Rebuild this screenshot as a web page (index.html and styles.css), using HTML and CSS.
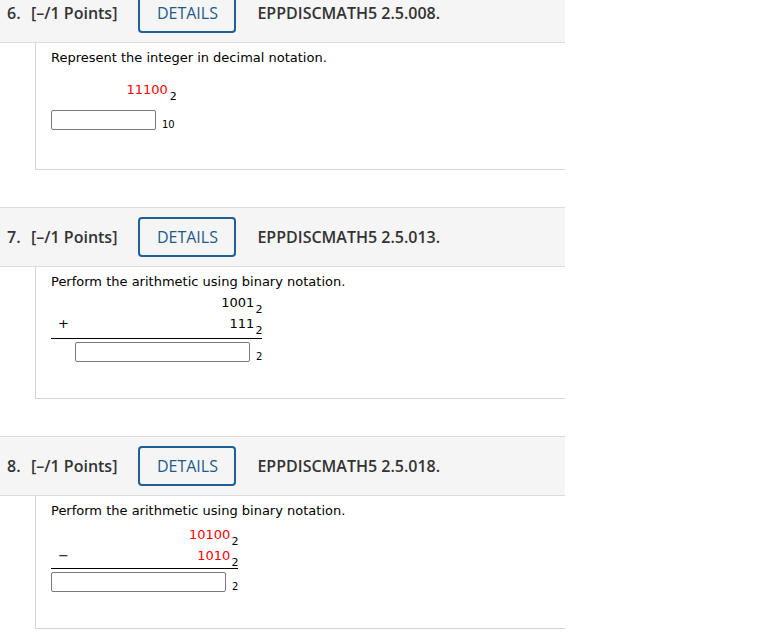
FILE: index.html
```html
<!DOCTYPE html>
<html lang="en">
<head>
  <meta charset="UTF-8">
  <meta name="viewport" content="width=device-width, initial-scale=1.0">
  <title>Assignment</title>
  <link rel="stylesheet" href="styles.css">
</head>
<body>
  <div class="page">
    <div class="question">
      <div class="q-head">
        <span class="q-num">6.</span>
        <span class="q-points">[–/1 Points]</span>
        <button class="details" type="button">DETAILS</button>
        <span class="q-code">EPPDISCMATH5 2.5.008.</span>
      </div>
      <div class="q-body">
        <p class="prompt">Represent the integer in decimal notation.</p>
        <div class="convert">
          <div class="num"><span class="red">11100</span><sub>2</sub></div>
          <div class="answer"><input type="text" class="box box-sm"><span class="base">10</span></div>
        </div>
      </div>
    </div>

    <div class="question">
      <div class="q-head">
        <span class="q-num">7.</span>
        <span class="q-points">[–/1 Points]</span>
        <button class="details" type="button">DETAILS</button>
        <span class="q-code">EPPDISCMATH5 2.5.013.</span>
      </div>
      <div class="q-body">
        <p class="prompt">Perform the arithmetic using binary notation.</p>
        <div class="arith arith-add">
          <span class="op"></span>
          <span class="num">1001<sub>2</sub></span>
          <span class="op rule">+</span>
          <span class="num rule">111<sub>2</sub></span>
          <div class="answer col-num"><input type="text" class="box"><span class="base">2</span></div>
        </div>
      </div>
    </div>

    <div class="question">
      <div class="q-head">
        <span class="q-num">8.</span>
        <span class="q-points">[–/1 Points]</span>
        <button class="details" type="button">DETAILS</button>
        <span class="q-code">EPPDISCMATH5 2.5.018.</span>
      </div>
      <div class="q-body">
        <p class="prompt">Perform the arithmetic using binary notation.</p>
        <div class="arith arith-sub">
          <span class="op"></span>
          <span class="num"><span class="red">10100</span><sub>2</sub></span>
          <span class="op rule">&minus;</span>
          <span class="num rule"><span class="red">1010</span><sub>2</sub></span>
          <div class="answer col-all"><input type="text" class="box"><span class="base">2</span></div>
        </div>
      </div>
    </div>
  </div>
</body>
</html>
```

FILE: styles.css
```css
body {
  margin: 0;
  font-family: "DejaVu Sans", Verdana, sans-serif;
  font-size: 13px;
  color: #000;
  background-color: #fff;
}
.page {
  width: 565px;
  margin-top: -17px;
}
.question {
  margin-bottom: 37px;
}
.q-head {
  display: flex;
  align-items: center;
  height: 58px;
  padding-left: 7px;
  background-color: #f5f5f5;
  border-top: 1px solid #dcdcdc;
  border-bottom: 1px solid #dcdcdc;
  font-family: "Open Sans", "Noto Sans", sans-serif;
  font-size: 16px;
  font-weight: 600;
  color: #333;
}
.q-num {
  width: 24px;
}
.q-points {
  margin-right: 21px;
}
.details {
  width: 98px;
  height: 40px;
  margin-right: 21px;
  padding: 0;
  background: transparent;
  border: 2px solid #1c6094;
  border-radius: 4px;
  font-family: "Open Sans", "Noto Sans", sans-serif;
  font-size: 16px;
  font-weight: 400;
  color: #1f5a88;
  cursor: pointer;
}
.q-body {
  margin-left: 35px;
  padding: 7px 15px 36px;
  border-left: 1px solid #d4d4d4;
  border-bottom: 1px solid #d4d4d4;
}
.prompt {
  margin: 0;
  line-height: 16px;
}
.red {
  color: #ff0000;
}
.num {
  line-height: 21px;
  text-align: right;
}
.num sub {
  margin-left: 1px;
  font-size: 11px;
  line-height: 0;
  vertical-align: -6px;
}
.convert {
  display: inline-flex;
  flex-direction: column;
  align-items: flex-end;
  margin: 13px 0 3px;
}
.convert .num {
  margin-right: -2px;
}
.convert .num sub {
  margin-left: 2px;
}
.convert .answer {
  margin-top: 10px;
}
.answer {
  display: flex;
  align-items: flex-end;
}
.box {
  box-sizing: border-box;
  width: 175px;
  height: 20px;
  margin: 0;
  border: 1px solid #7a7a7a;
  border-radius: 2px;
  background: #fff;
}
.box-sm {
  width: 105px;
}
.base {
  margin-left: 6px;
  font-size: 10px;
  line-height: 10px;
}
.arith {
  display: inline-grid;
  grid-template-columns: 24px auto;
}
.arith-add {
  margin-top: 2px;
}
.arith-add .rule {
  padding-bottom: 4px;
}
.arith-sub {
  margin-top: 5px;
}
.arith-sub .rule {
  padding-bottom: 2px;
}
.op {
  line-height: 21px;
  padding-left: 7px;
}
.rule {
  border-bottom: 1px solid #000;
}
.arith .answer {
  margin-top: 3px;
  justify-self: end;
}
.col-num {
  grid-column: 2;
}
.col-all {
  grid-column: 1 / -1;
}
```
